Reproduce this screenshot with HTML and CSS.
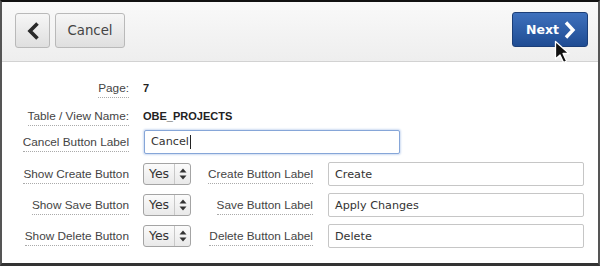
FILE: index.html
```html
<!DOCTYPE html>
<html>
<head>
<meta charset="utf-8">
<link rel="stylesheet" href="styles.css">
</head>
<body>
<div class="frame">
  <div class="header">
    <div class="btn back">
      <svg width="14" height="20" viewBox="0 0 14 20"><path d="M11.5 2.5 L4 10 L11.5 17.5" fill="none" stroke="#2a2a2a" stroke-width="3.6" stroke-linejoin="miter"/></svg>
    </div>
    <div class="btn cancel">Cancel</div>
    <div class="spacer"></div>
    <div class="btn next">Next
      <svg width="13" height="20" viewBox="0 0 13 20"><path d="M3 2.5 L10 10 L3 17.5" fill="none" stroke="#fff" stroke-width="3.4"/></svg>
    </div>
    <svg class="cursor" width="20" height="24" viewBox="0 0 20 24"><path d="M1.5 1.5 L1.5 19 L6 15 L9.5 22.5 L12.5 21 L9 13.5 L15 13.5 Z" fill="#111" stroke="#fff" stroke-width="1.3" stroke-linejoin="round"/></svg>
  </div>
  <div class="form">
    <div class="row r1">
      <div class="label"><span>Page:</span></div>
      <div class="value">7</div>
    </div>
    <div class="row r2">
      <div class="label"><span>Table / View Name:</span></div>
      <div class="value">OBE_PROJECTS</div>
    </div>
    <div class="row r3">
      <div class="label"><span>Cancel Button Label</span></div>
      <div class="input focus">Cancel<span class="caret"></span></div>
    </div>
    <div class="row r4">
      <div class="label"><span>Show Create Button</span></div>
      <div class="select"><span class="sv">Yes</span><span class="arr"><svg width="8" height="12" viewBox="0 0 8 12"><path d="M4 0.5 L7.5 4.5 L0.5 4.5 Z M4 11.5 L7.5 7.5 L0.5 7.5 Z" fill="#333"/></svg></span></div>
      <div class="label2"><span>Create Button Label</span></div>
      <div class="input wide">Create</div>
    </div>
    <div class="row r5">
      <div class="label"><span>Show Save Button</span></div>
      <div class="select"><span class="sv">Yes</span><span class="arr"><svg width="8" height="12" viewBox="0 0 8 12"><path d="M4 0.5 L7.5 4.5 L0.5 4.5 Z M4 11.5 L7.5 7.5 L0.5 7.5 Z" fill="#333"/></svg></span></div>
      <div class="label2"><span>Save Button Label</span></div>
      <div class="input wide">Apply Changes</div>
    </div>
    <div class="row r6">
      <div class="label"><span>Show Delete Button</span></div>
      <div class="select"><span class="sv">Yes</span><span class="arr"><svg width="8" height="12" viewBox="0 0 8 12"><path d="M4 0.5 L7.5 4.5 L0.5 4.5 Z M4 11.5 L7.5 7.5 L0.5 7.5 Z" fill="#333"/></svg></span></div>
      <div class="label2"><span>Delete Button Label</span></div>
      <div class="input wide">Delete</div>
    </div>
  </div>
</div>
</body>
</html>
```

FILE: styles.css
```css
* { box-sizing: border-box; }
html, body { margin: 0; padding: 0; background: #fff; }
.frame {
  width: 600px;
  height: 266px;
  border: 2px solid #555;
  border-top-color: #111;
  border-bottom-color: #333;
  border-bottom-width: 3px;
  overflow: hidden;
  position: relative;
}
.header {
  height: 60px;
  background: linear-gradient(#f9f9f9, #eeeeee);
  border-bottom: 1px solid #d2d2d2;
  display: flex;
  align-items: flex-start;
  padding: 11px 10px 0 13px;
  position: relative;
}
.btn {
  height: 35px;
  border: 1px solid #b9b9b9;
  border-radius: 3px;
  background: linear-gradient(#f6f6f6, #dfdfdf);
  display: flex;
  align-items: center;
  justify-content: center;
  font-family: "DejaVu Sans", sans-serif;
  color: #444;
}
.back { width: 35px; }
.cancel { width: 70px; margin-left: 5px; font-size: 13.3px; }
.spacer { flex: 1; }
.next {
  width: 76px;
  margin-top: -1px;
  background: linear-gradient(#3f71bd, #1f4c93);
  border-color: #1b3e78;
  color: #fff;
  font-weight: bold;
  font-size: 12.5px;
  gap: 4px;
  padding-left: 2px;
}
.cursor { position: absolute; left: 552px; top: 38px; }
.form {
  padding-top: 14px;
  font-family: "Liberation Sans", Arial, sans-serif;
}
.row { display: flex; align-items: center; height: 24px; }
.r2 { margin-top: 4px; }
.r3 { margin-top: 1px; height: 25px; }
.r4 { margin-top: 7px; height: 26px; }
.r5 { margin-top: 5px; height: 26px; }
.r6 { margin-top: 5px; height: 26px; }
.label { width: 127px; text-align: right; font-size: 11.8px; color: #444; }
.label2 { width: 122px; text-align: right; font-size: 11.8px; color: #444; }
.label span, .label2 span {
  border-bottom: 1px dotted #aaa;
  padding-bottom: 2px;
}
.value { margin-left: 14px; font-size: 11px; font-weight: bold; color: #222; }
.input {
  margin-left: 15px;
  width: 256px;
  height: 24px;
  border: 1px solid #c6c6c6;
  border-radius: 2px;
  background: #fff;
  font-family: "DejaVu Sans", sans-serif;
  font-size: 11.2px;
  color: #333;
  display: flex;
  align-items: center;
  padding-left: 6px;
}
.input.focus {
  border-color: #86a6d8;
  box-shadow: 0 0 2px 1px #cfdcf2;
}
.caret { display: inline-block; width: 1px; height: 14px; background: #222; margin-left: 1px; }
.select {
  margin-left: 14px;
  width: 48px;
  height: 22px;
  border: 1px solid #a4a4a4;
  border-radius: 3px;
  background: linear-gradient(#fbfbfb, #e9e9e9);
  display: flex;
  align-items: center;
  font-family: "DejaVu Sans", sans-serif;
  color: #333;
}
.sv { width: 31px; text-align: center; font-size: 12.5px; border-right: 1px solid #c8c8c8; height: 20px; line-height: 20px; }
.arr { flex: 1; display: flex; align-items: center; justify-content: center; }
```
